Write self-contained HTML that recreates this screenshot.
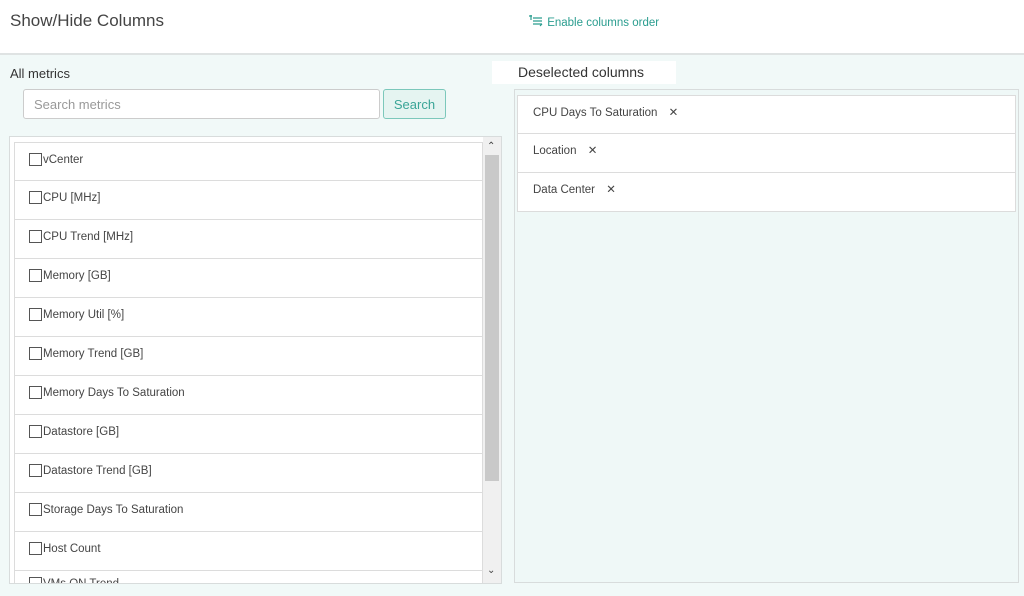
<!DOCTYPE html>
<html><head><style>
*{box-sizing:border-box;margin:0;padding:0}
body{width:1024px;height:596px;overflow:hidden;background:#f1f9f8;font-family:"Liberation Sans",sans-serif;position:relative;color:#333}
.hdr{position:absolute;left:0;top:0;width:1024px;height:55px;background:#fff;border-bottom:2px solid #dfe3e3}
.title{position:absolute;left:10px;top:11px;font-size:17px;color:#444}
.eco{position:absolute;left:528px;top:15px;font-size:11.5px;color:#2a9d8f}
.lbl{position:absolute;font-size:13px;color:#333}
.search{position:absolute;left:23px;top:89px;width:357px;height:30px;background:#fff;border:1px solid #ccc;border-radius:3px;font-size:13px;color:#999;padding:7px 10px}
.btn{position:absolute;left:383px;top:89px;width:63px;height:30px;background:#e5f4f1;border:1px solid #7cc8bb;border-radius:3px;font-size:13px;color:#3aa597;text-align:center;line-height:30px}
.lp{position:absolute;left:9px;top:136px;width:493px;height:448px;border:1px solid #d8dcdc;background:#fff;overflow:hidden}
.row{position:absolute;left:4px;width:469px;height:39px;border:1px solid #dcdcdc;border-top:none;font-size:11.5px;color:#444;padding:10px 0 0 14px;background:#fff}
.cb{display:inline-block;width:13px;height:13px;border:1px solid #555;vertical-align:-3px;margin-right:1px}
.sb{position:absolute;left:473px;top:0;width:18px;height:448px;background:#f0f0f0}
.th{position:absolute;left:2px;top:18px;width:14px;height:326px;background:#c9c9c9}
.rp{position:absolute;left:514px;top:89px;width:505px;height:494px;border:1px solid #d8dcdc;background:#eff8f7}
.rr{position:absolute;left:2px;width:499px;height:39px;background:#fff;border:1px solid #dcdcdc;font-size:11.5px;color:#444;padding:9px 0 0 15px}
.rr b{font-weight:normal;margin-left:8px}
</style></head><body>
<div class="hdr"><div class="title">Show/Hide Columns</div>
<div class="eco"><svg width="16" height="12" viewBox="0 0 16 12" style="vertical-align:-1px"><path d="M1 1h3M3 0v5M5 3h9M5 6h9M5 9h9M14 9l-2 2" stroke="#2a9d8f" stroke-width="1.2" fill="none"/></svg> Enable columns order</div></div>
<div class="lbl" style="left:10px;top:66px">All metrics</div>
<div class="lbl" style="left:492px;top:61px;width:184px;height:23px;background:#fff;padding:3px 0 0 26px;font-size:14px">Deselected columns</div>
<div class="search">Search metrics</div>
<div class="btn">Search</div>
<div class="lp">
<div class="row" style="top:5px;border-top:1px solid #dcdcdc"><span class="cb"></span>vCenter</div>
<div class="row" style="top:44px"><span class="cb"></span>CPU [MHz]</div>
<div class="row" style="top:83px"><span class="cb"></span>CPU Trend [MHz]</div>
<div class="row" style="top:122px"><span class="cb"></span>Memory [GB]</div>
<div class="row" style="top:161px"><span class="cb"></span>Memory Util [%]</div>
<div class="row" style="top:200px"><span class="cb"></span>Memory Trend [GB]</div>
<div class="row" style="top:239px"><span class="cb"></span>Memory Days To Saturation</div>
<div class="row" style="top:278px"><span class="cb"></span>Datastore [GB]</div>
<div class="row" style="top:317px"><span class="cb"></span>Datastore Trend [GB]</div>
<div class="row" style="top:356px"><span class="cb"></span>Storage Days To Saturation</div>
<div class="row" style="top:395px"><span class="cb"></span>Host Count</div>
<div class="row" style="top:434px;padding-top:6px"><span class="cb"></span>VMs ON Trend</div>
<div class="sb"><div class="th"></div>
<div style="position:absolute;left:4px;top:4px;font-size:10px;color:#444">&#8963;</div>
<div style="position:absolute;left:4px;top:428px;font-size:10px;color:#444">&#8964;</div></div>
</div>
<div class="rp">
<div class="rr" style="top:5px">CPU Days To Saturation <b>✕</b></div>
<div class="rr" style="top:44px;border-top:none">Location <b>✕</b></div>
<div class="rr" style="top:83px;border-top:none">Data Center <b>✕</b></div>
</div>
</body></html>
